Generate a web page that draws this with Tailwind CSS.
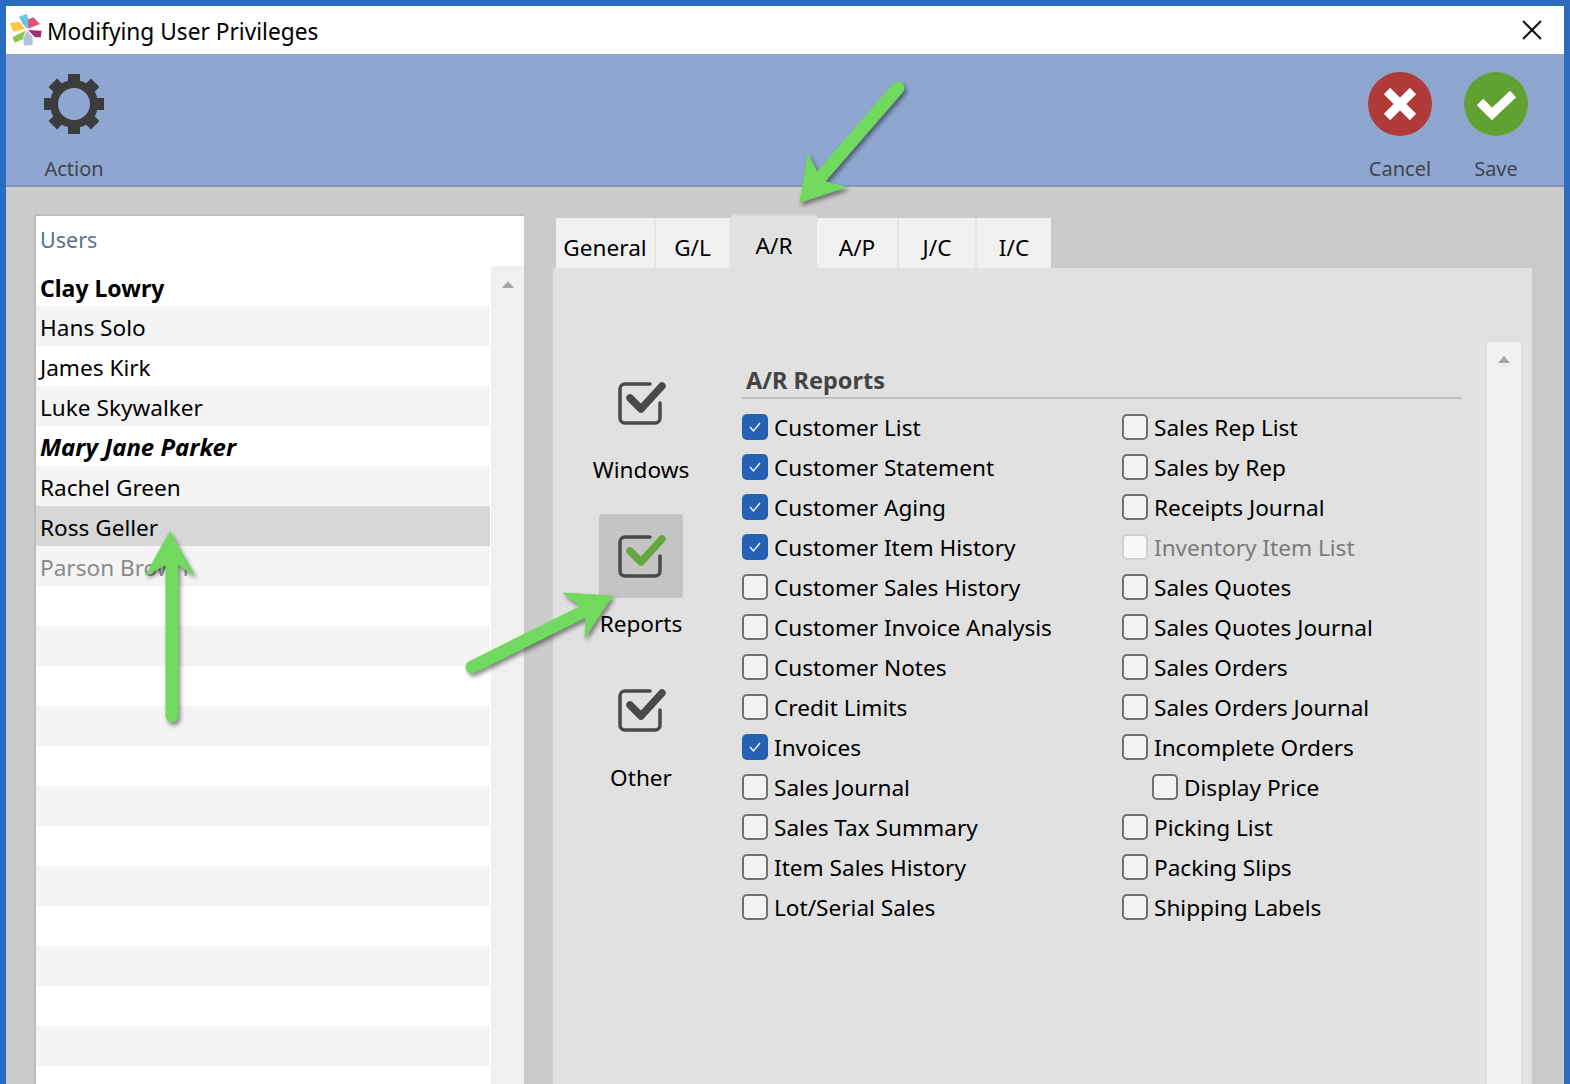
<!DOCTYPE html>
<html lang="en">
<head>
    <meta charset="UTF-8">
    <title>Modifying User Privileges</title>
    <script src="https://cdn.jsdelivr.net/npm/@tailwindcss/browser@4"></script>
</head>
<body class="overflow-hidden bg-white font-['Noto_Sans',sans-serif]">
<div class="relative h-[1084px] w-[1570px] overflow-hidden">
    <div class="flex h-full flex-col border-x-[6px] border-t-[6px] border-[#2a6cc0]">
        <!-- Title bar -->
        <div class="flex h-[48px] shrink-0 items-center justify-between bg-white">
            <div class="flex items-center">
                <svg class="ml-[3px] h-[34px] w-[34px]" viewBox="0 0 34 34">
                    <polygon points="10,3.7 17.7,1 20.3,8.7 18.3,15.7 13.7,11" fill="#6cc5e0"/>
                    <polygon points="19.3,6.3 24.3,4.3 31,11 19,15.7" fill="#e2527f"/>
                    <polygon points="19,17 32.7,17.7 31.7,24.3 26,24.3" fill="#a02f6d"/>
                    <polygon points="17.7,17.7 23.7,23.7 23.7,32 15,32.7 14.3,25.3" fill="#b3c2dc"/>
                    <polygon points="16.3,17.7 13.7,26.3 6,29.7 3.3,24.3" fill="#8cc850"/>
                    <polygon points="16,16 4.3,18.7 1,10.3 10.3,8.7" fill="#f8c845"/>
                </svg>
                <span class="ml-[4px] mt-[4px] text-[22.7px] text-black">Modifying User Privileges</span>
            </div>
            <svg class="mr-[22px] h-[20px] w-[20px]" viewBox="0 0 20 20"><path d="M1 1L19 19M19 1L1 19" stroke="#111" stroke-width="2"/></svg>
        </div>

        <!-- Toolbar -->
        <div class="flex h-[133px] shrink-0 justify-between border-b-2 border-[#7f96bf] bg-[#8fa6d1] text-[20px] text-[#3d4450]">
            <div class="ml-[38px] flex w-[60px] flex-col items-center">
                <svg class="mt-[20px] h-[60px] w-[60px]" viewBox="0 0 60 60">
                    <g fill="#3c3c3c">
                        <rect x="24" y="0" width="12" height="60"/>
                        <rect x="24" y="0" width="12" height="60" transform="rotate(45 30 30)"/>
                        <rect x="24" y="0" width="12" height="60" transform="rotate(90 30 30)"/>
                        <rect x="24" y="0" width="12" height="60" transform="rotate(135 30 30)"/>
                    </g>
                    <circle cx="30" cy="30" r="20" fill="none" stroke="#3c3c3c" stroke-width="8"/>
                    <circle cx="30" cy="30" r="16" fill="#8fa6d1"/>
                </svg>
                <span class="mt-[20px]">Action</span>
            </div>
            <div class="mr-[36px] flex gap-[32px]">
                <div class="flex w-[64px] flex-col items-center">
                    <svg class="mt-[18px] h-[64px] w-[64px]" viewBox="0 0 64 64">
                        <circle cx="32" cy="32" r="32" fill="#af3a38"/>
                        <path d="M19 19L45 45M45 19L19 45" stroke="#fff" stroke-width="9"/>
                    </svg>
                    <span class="mt-[18px]">Cancel</span>
                </div>
                <div class="flex w-[64px] flex-col items-center">
                    <svg class="mt-[18px] h-[64px] w-[64px]" viewBox="0 0 64 64">
                        <circle cx="32" cy="32" r="32" fill="#5fa231"/>
                        <path d="M16 30L28 42L49 22" fill="none" stroke="#fff" stroke-width="9"/>
                    </svg>
                    <span class="mt-[18px]">Save</span>
                </div>
            </div>
        </div>

        <!-- Main area -->
        <div class="flex min-h-0 flex-1 bg-[#cbcbcb] pl-[28px] pt-[27px]">
            <!-- Users panel -->
            <div class="flex w-[490px] shrink-0 flex-col border-l-2 border-t-2 border-[#bdbdbd] bg-white">
                <div class="flex h-[50px] shrink-0 items-center pb-[2px] pl-[4px] text-[21.5px] text-[#5b6f8e]">Users</div>
                <div class="flex min-h-0 flex-1">
                    <div class="w-[454px] shrink-0 text-[22.6px] leading-[44px] text-black">
                        <div class="h-[40px] bg-white pl-[4px] text-[23px] font-bold">Clay Lowry</div>
                        <div class="h-[40px] bg-[#f4f4f4] pl-[4px]">Hans Solo</div>
                        <div class="h-[40px] bg-white pl-[4px]">James Kirk</div>
                        <div class="h-[40px] bg-[#f4f4f4] pl-[4px]">Luke Skywalker</div>
                        <div class="h-[40px] bg-white pl-[4px] text-[24px] font-bold italic leading-[42px]">Mary Jane Parker</div>
                        <div class="h-[40px] bg-[#f4f4f4] pl-[4px]">Rachel Green</div>
                        <div class="h-[40px] bg-[#d7d7d7] pl-[4px]">Ross Geller</div>
                        <div class="h-[40px] bg-[#f4f4f4] pl-[4px] text-[#8a8a8a]">Parson Brown</div>
                        <div class="h-[40px] bg-white"></div>
                        <div class="h-[40px] bg-[#f4f4f4]"></div>
                        <div class="h-[40px] bg-white"></div>
                        <div class="h-[40px] bg-[#f4f4f4]"></div>
                        <div class="h-[40px] bg-white"></div>
                        <div class="h-[40px] bg-[#f4f4f4]"></div>
                        <div class="h-[40px] bg-white"></div>
                        <div class="h-[40px] bg-[#f4f4f4]"></div>
                        <div class="h-[40px] bg-white"></div>
                        <div class="h-[40px] bg-[#f4f4f4]"></div>
                        <div class="h-[40px] bg-white"></div>
                        <div class="h-[40px] bg-[#f4f4f4]"></div>
                    </div>
                    <div class="ml-[1px] flex-1 bg-[#f0f0f0] pt-[15px]">
                        <div class="mx-auto h-0 w-0 border-x-[6px] border-b-[7px] border-x-transparent border-b-[#a6a6a6]"></div>
                    </div>
                </div>
            </div>

            <!-- Tabs and panel -->
            <div class="ml-[29px] flex w-[979px] shrink-0 flex-col">
                <div class="flex h-[54px] shrink-0 items-end pl-[3px] text-[22.6px] text-black">
                    <div class="flex h-[50px] w-[100px] items-center justify-center border-r-2 border-[#e4e4e4] bg-[#f0f0f0] pt-[9px]">General</div>
                    <div class="flex h-[50px] w-[75px] items-center justify-center border-r-2 border-[#e4e4e4] bg-[#f0f0f0] pt-[9px]">G/L</div>
                    <div class="flex h-[54px] w-[86px] items-center justify-center border-t-2 border-[#d6d6d6] bg-[#e1e1e1] pt-[7px]">A/R</div>
                    <div class="flex h-[50px] w-[82px] items-center justify-center border-r-2 border-[#e4e4e4] bg-[#f0f0f0] pt-[9px]">A/P</div>
                    <div class="flex h-[50px] w-[78px] items-center justify-center border-r-2 border-[#e4e4e4] bg-[#f0f0f0] pt-[9px]">J/C</div>
                    <div class="flex h-[50px] w-[74px] items-center justify-center bg-[#f0f0f0] pt-[9px]">I/C</div>
                </div>
                <div class="flex min-h-0 flex-1 bg-[#e1e1e1] pt-[74px] text-[22.6px] text-black">
                    <!-- Section switcher -->
                    <div class="ml-[46px] mt-[19px] flex w-[84px] shrink-0 flex-col items-center">
                        <div class="flex h-[84px] w-[84px] items-center justify-center rounded">
                            <svg class="ml-[2px] h-[48px] w-[48px]" viewBox="0 0 48 48">
                                <path d="M32 5H7a5 5 0 0 0-5 5v29a5 5 0 0 0 5 5h30a5 5 0 0 0 5-5V24" fill="none" stroke="#4a4a4a" stroke-width="3.5" stroke-linecap="round"/>
                                <path d="M12 19L23 30L44 7" fill="none" stroke="#4a4a4a" stroke-width="7.5" stroke-linecap="round" stroke-linejoin="round"/>
                            </svg>
                        </div>
                        <span class="mt-[5px] leading-[40px]">Windows</span>
                        <div class="mt-[24px] flex h-[84px] w-[84px] items-center justify-center rounded bg-[#c4c4c4]">
                            <svg class="ml-[2px] h-[48px] w-[48px]" viewBox="0 0 48 48">
                                <path d="M32 5H7a5 5 0 0 0-5 5v29a5 5 0 0 0 5 5h30a5 5 0 0 0 5-5V24" fill="none" stroke="#4a4a4a" stroke-width="3.5" stroke-linecap="round"/>
                                <path d="M12 19L23 30L44 7" fill="none" stroke="#66a640" stroke-width="7.5" stroke-linecap="round" stroke-linejoin="round"/>
                            </svg>
                        </div>
                        <span class="mt-[6px] leading-[40px]">Reports</span>
                        <div class="mt-[24px] flex h-[84px] w-[84px] items-center justify-center rounded">
                            <svg class="ml-[2px] h-[48px] w-[48px]" viewBox="0 0 48 48">
                                <path d="M32 5H7a5 5 0 0 0-5 5v29a5 5 0 0 0 5 5h30a5 5 0 0 0 5-5V24" fill="none" stroke="#4a4a4a" stroke-width="3.5" stroke-linecap="round"/>
                                <path d="M12 19L23 30L44 7" fill="none" stroke="#4a4a4a" stroke-width="7.5" stroke-linecap="round" stroke-linejoin="round"/>
                            </svg>
                        </div>
                        <span class="mt-[6px] leading-[40px]">Other</span>
                    </div>

                    <!-- Report checkboxes -->
                    <div class="ml-[59px] w-[720px] shrink-0 pt-[22px]">
                        <div class="h-[35px] border-b-2 border-[#bfbfbf] pl-[4px] text-[23.5px] font-bold leading-[32px] text-[#444]">A/R Reports</div>
                        <div class="mt-[8px] flex">
                            <div class="w-[380px] shrink-0">
                                <div class="flex h-[40px] items-center"><span class="flex h-[26px] w-[26px] items-center justify-center rounded-[5px] bg-[#2562b4]"><svg class="h-[14px] w-[14px]" viewBox="0 0 14 14"><path d="M2 7l3.5 4L12 3" fill="none" stroke="#fff" stroke-width="1.3"/></svg></span><span class="ml-[6px] pt-[2px]">Customer List</span></div>
                                <div class="flex h-[40px] items-center"><span class="flex h-[26px] w-[26px] items-center justify-center rounded-[5px] bg-[#2562b4]"><svg class="h-[14px] w-[14px]" viewBox="0 0 14 14"><path d="M2 7l3.5 4L12 3" fill="none" stroke="#fff" stroke-width="1.3"/></svg></span><span class="ml-[6px] pt-[2px]">Customer Statement</span></div>
                                <div class="flex h-[40px] items-center"><span class="flex h-[26px] w-[26px] items-center justify-center rounded-[5px] bg-[#2562b4]"><svg class="h-[14px] w-[14px]" viewBox="0 0 14 14"><path d="M2 7l3.5 4L12 3" fill="none" stroke="#fff" stroke-width="1.3"/></svg></span><span class="ml-[6px] pt-[2px]">Customer Aging</span></div>
                                <div class="flex h-[40px] items-center"><span class="flex h-[26px] w-[26px] items-center justify-center rounded-[5px] bg-[#2562b4]"><svg class="h-[14px] w-[14px]" viewBox="0 0 14 14"><path d="M2 7l3.5 4L12 3" fill="none" stroke="#fff" stroke-width="1.3"/></svg></span><span class="ml-[6px] pt-[2px]">Customer Item History</span></div>
                                <div class="flex h-[40px] items-center"><span class="h-[26px] w-[26px] rounded-[5px] border-2 border-[#6f6f6f] bg-[#f2f2f2]"></span><span class="ml-[6px] pt-[2px]">Customer Sales History</span></div>
                                <div class="flex h-[40px] items-center"><span class="h-[26px] w-[26px] rounded-[5px] border-2 border-[#6f6f6f] bg-[#f2f2f2]"></span><span class="ml-[6px] pt-[2px]">Customer Invoice Analysis</span></div>
                                <div class="flex h-[40px] items-center"><span class="h-[26px] w-[26px] rounded-[5px] border-2 border-[#6f6f6f] bg-[#f2f2f2]"></span><span class="ml-[6px] pt-[2px]">Customer Notes</span></div>
                                <div class="flex h-[40px] items-center"><span class="h-[26px] w-[26px] rounded-[5px] border-2 border-[#6f6f6f] bg-[#f2f2f2]"></span><span class="ml-[6px] pt-[2px]">Credit Limits</span></div>
                                <div class="flex h-[40px] items-center"><span class="flex h-[26px] w-[26px] items-center justify-center rounded-[5px] bg-[#2562b4]"><svg class="h-[14px] w-[14px]" viewBox="0 0 14 14"><path d="M2 7l3.5 4L12 3" fill="none" stroke="#fff" stroke-width="1.3"/></svg></span><span class="ml-[6px] pt-[2px]">Invoices</span></div>
                                <div class="flex h-[40px] items-center"><span class="h-[26px] w-[26px] rounded-[5px] border-2 border-[#6f6f6f] bg-[#f2f2f2]"></span><span class="ml-[6px] pt-[2px]">Sales Journal</span></div>
                                <div class="flex h-[40px] items-center"><span class="h-[26px] w-[26px] rounded-[5px] border-2 border-[#6f6f6f] bg-[#f2f2f2]"></span><span class="ml-[6px] pt-[2px]">Sales Tax Summary</span></div>
                                <div class="flex h-[40px] items-center"><span class="h-[26px] w-[26px] rounded-[5px] border-2 border-[#6f6f6f] bg-[#f2f2f2]"></span><span class="ml-[6px] pt-[2px]">Item Sales History</span></div>
                                <div class="flex h-[40px] items-center"><span class="h-[26px] w-[26px] rounded-[5px] border-2 border-[#6f6f6f] bg-[#f2f2f2]"></span><span class="ml-[6px] pt-[2px]">Lot/Serial Sales</span></div>
                            </div>
                            <div class="flex-1">
                                <div class="flex h-[40px] items-center"><span class="h-[26px] w-[26px] rounded-[5px] border-2 border-[#6f6f6f] bg-[#f2f2f2]"></span><span class="ml-[6px] pt-[2px]">Sales Rep List</span></div>
                                <div class="flex h-[40px] items-center"><span class="h-[26px] w-[26px] rounded-[5px] border-2 border-[#6f6f6f] bg-[#f2f2f2]"></span><span class="ml-[6px] pt-[2px]">Sales by Rep</span></div>
                                <div class="flex h-[40px] items-center"><span class="h-[26px] w-[26px] rounded-[5px] border-2 border-[#6f6f6f] bg-[#f2f2f2]"></span><span class="ml-[6px] pt-[2px]">Receipts Journal</span></div>
                                <div class="flex h-[40px] items-center"><span class="h-[26px] w-[26px] rounded-[5px] border-2 border-[#cfcfcf] bg-[#f8f8f8]"></span><span class="ml-[6px] pt-[2px] text-[#7a7a7a]">Inventory Item List</span></div>
                                <div class="flex h-[40px] items-center"><span class="h-[26px] w-[26px] rounded-[5px] border-2 border-[#6f6f6f] bg-[#f2f2f2]"></span><span class="ml-[6px] pt-[2px]">Sales Quotes</span></div>
                                <div class="flex h-[40px] items-center"><span class="h-[26px] w-[26px] rounded-[5px] border-2 border-[#6f6f6f] bg-[#f2f2f2]"></span><span class="ml-[6px] pt-[2px]">Sales Quotes Journal</span></div>
                                <div class="flex h-[40px] items-center"><span class="h-[26px] w-[26px] rounded-[5px] border-2 border-[#6f6f6f] bg-[#f2f2f2]"></span><span class="ml-[6px] pt-[2px]">Sales Orders</span></div>
                                <div class="flex h-[40px] items-center"><span class="h-[26px] w-[26px] rounded-[5px] border-2 border-[#6f6f6f] bg-[#f2f2f2]"></span><span class="ml-[6px] pt-[2px]">Sales Orders Journal</span></div>
                                <div class="flex h-[40px] items-center"><span class="h-[26px] w-[26px] rounded-[5px] border-2 border-[#6f6f6f] bg-[#f2f2f2]"></span><span class="ml-[6px] pt-[2px]">Incomplete Orders</span></div>
                                <div class="flex h-[40px] items-center pl-[30px]"><span class="h-[26px] w-[26px] rounded-[5px] border-2 border-[#6f6f6f] bg-[#f2f2f2]"></span><span class="ml-[6px] pt-[2px]">Display Price</span></div>
                                <div class="flex h-[40px] items-center"><span class="h-[26px] w-[26px] rounded-[5px] border-2 border-[#6f6f6f] bg-[#f2f2f2]"></span><span class="ml-[6px] pt-[2px]">Picking List</span></div>
                                <div class="flex h-[40px] items-center"><span class="h-[26px] w-[26px] rounded-[5px] border-2 border-[#6f6f6f] bg-[#f2f2f2]"></span><span class="ml-[6px] pt-[2px]">Packing Slips</span></div>
                                <div class="flex h-[40px] items-center"><span class="h-[26px] w-[26px] rounded-[5px] border-2 border-[#6f6f6f] bg-[#f2f2f2]"></span><span class="ml-[6px] pt-[2px]">Shipping Labels</span></div>
                            </div>
                        </div>
                    </div>

                    <!-- Panel scrollbar -->
                    <div class="ml-[25px] w-[34px] shrink-0 bg-[#f0f0f0] pt-[14px]">
                        <div class="mx-auto h-0 w-0 border-x-[6px] border-b-[7px] border-x-transparent border-b-[#a6a6a6]"></div>
                    </div>
                </div>
            </div>
        </div>
    </div>

    <!-- Annotation arrows drawn over the screenshot -->
    <svg class="pointer-events-none absolute inset-0 h-[1084px] w-[1570px] drop-shadow-[2px_3px_2px_rgba(0,0,0,0.45)]" viewBox="0 0 1570 1084">
        <g fill="#72d95f" stroke="#72d95f" stroke-linejoin="round" stroke-linecap="round">
            <path d="M898 88L820 178" stroke-width="13" fill="none"/>
            <polygon points="800,202 808,154 817,172 826,182 846,187" stroke-width="1"/>
            <path d="M472 667L585 611" stroke-width="13" fill="none"/>
            <polygon points="612,596 563,593 579,605 586,619 585,637" stroke-width="1"/>
            <path d="M172 716V560" stroke-width="13" fill="none"/>
            <polygon points="170,532 194,575 179,565 165,565 146,575" stroke-width="1"/>
        </g>
    </svg>
</div>
</body>
</html>
